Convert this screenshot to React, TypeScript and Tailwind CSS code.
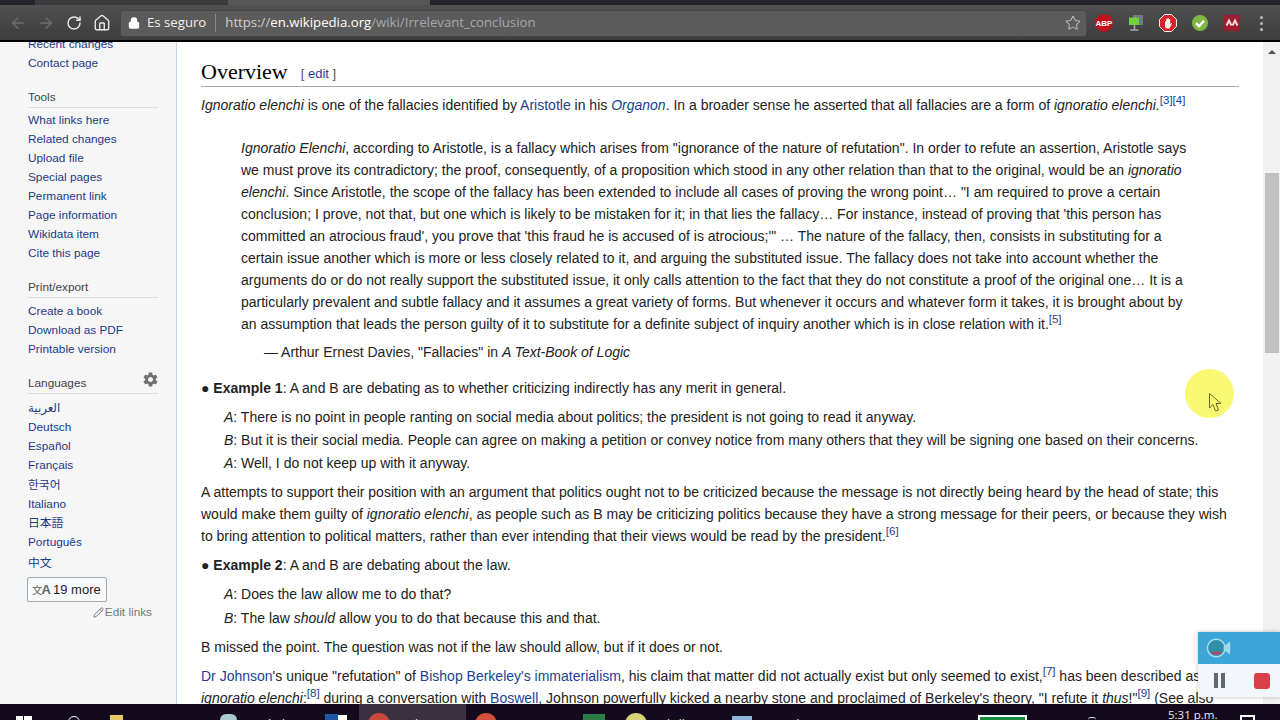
import React from "react";
import { ArrowLeft, ArrowRight, RotateCw, House, Lock, Star, Pencil } from "lucide-react";
import { IoMdSettings } from "react-icons/io";

const L = ({ children }: { children: React.ReactNode }) => <a className="text-[#1b3f94]">{children}</a>;
const S = ({ children }: { children: React.ReactNode }) => (
  <sup className="text-[11.5px] leading-none text-[#1b3f94] align-[0px]">{children}</sup>
);
const Line = ({ children }: { children: React.ReactNode }) => <div className="whitespace-nowrap">{children}</div>;

const Row = ({ children }: { children: React.ReactNode }) => (
  <div className="h-[19px] leading-[19px] text-[#1b3a88] whitespace-nowrap">{children}</div>
);
const Side = ({ items }: { items: string[] }) => (
  <div>
    {items.map((t) => (
      <Row key={t}>{t}</Row>
    ))}
  </div>
);
const Head = ({ children }: { children: React.ReactNode }) => (
  <div className="h-[20px] leading-[19px] text-[#444] border-b border-[#dcdcdc] w-[130px]">{children}</div>
);

function Ext({ children }: { children: React.ReactNode }) {
  return <div className="w-[18px] h-[18px] flex items-center justify-center shrink-0">{children}</div>;
}
const Tb = ({ children, className }: { children: React.ReactNode; className: string }) => (
  <div className={"mt-[13px] leading-[16px] text-[12px] whitespace-nowrap overflow-hidden shrink-0 " + className}>{children}</div>
);

export default function App() {
  return (
    <div className="relative w-[1280px] h-[720px] overflow-hidden flex flex-col bg-white font-['Liberation_Sans','Noto_Sans_CJK_KR','DejaVu_Sans',sans-serif]">
      {/* tab strip */}
      <div className="h-[5px] shrink-0 flex bg-[#24252a]">
        <div className="ml-[35px] w-[193px] h-[5px] bg-[#3a3a3c]" />
        <div className="w-[202px] h-[5px] bg-[#565656]" />
      </div>
      {/* toolbar */}
      <div className="h-[37px] pt-[1px] shrink-0 flex items-center bg-gradient-to-b from-[#505050] to-[#3d3d3d] border-b-2 border-black">
        <div className="flex items-center w-[120px] pl-[9px]">
          <ArrowLeft size={18} className="text-[#6d6d6d]" />
          <ArrowRight size={18} className="text-[#6d6d6d] ml-[10px]" />
          <RotateCw size={16} strokeWidth={2.2} className="text-[#e6e6e6] ml-[11px]" />
          <House size={18} strokeWidth={1.8} className="text-[#ececec] ml-[11px]" />
        </div>
        <div className="w-[967px] h-[27px] rounded-[3px] bg-[#5b5b5b] border border-[#454545] flex items-center pl-[7px] pr-[4px] font-['Open_Sans',sans-serif] text-[13.2px] whitespace-nowrap">
          <Lock size={12} strokeWidth={3} className="text-white fill-white" />
          <span className="ml-[7px] text-[#f0f0f0]">Es seguro</span>
          <span className="ml-[9px] mr-[9px] w-px h-[18px] bg-[#8a8a8a]" />
          <span className="text-[#d0d0d0]">https://</span>
          <span className="text-white">en.wikipedia.org</span>
          <span className="text-[#a8a8a8]">/wiki/Irrelevant_conclusion</span>
          <Star size={16} strokeWidth={1.6} className="ml-auto mr-[1px] text-[#b5b5b5]" />
        </div>
        <div className="flex items-center ml-[8px] gap-[14px]">
          <Ext>
            <svg width="18" height="18" viewBox="0 0 18 18"><polygon points="5.5,0.5 12.5,0.5 17.5,5.5 17.5,12.5 12.5,17.5 5.5,17.5 0.5,12.5 0.5,5.5" fill="#c2111a" /><text x="9" y="12" textAnchor="middle" fontSize="8" fontWeight="700" fill="#fff" fontFamily="Liberation Sans">ABP</text></svg>
          </Ext>
          <Ext>
            <svg width="18" height="18" viewBox="0 0 18 18"><rect x="6" y="1" width="10" height="10" fill="#6f7a86" /><rect x="2" y="3.5" width="10" height="7.5" fill="#6fd13a" /><path d="M7.5 11v4M3.5 16h8" stroke="#a8b0b0" strokeWidth="1.5" fill="none" /></svg>
          </Ext>
          <Ext>
            <svg width="18" height="18" viewBox="0 0 18 18"><polygon points="5.5,0.5 12.5,0.5 17.5,5.5 17.5,12.5 12.5,17.5 5.5,17.5 0.5,12.5 0.5,5.5" fill="#d9232b" stroke="#f4f4f4" strokeWidth="1" /><path d="M6 13 V7.5 a.8 .8 0 0 1 1.2 0 V5 a.8 .8 0 0 1 1.4 0 V4.6 a.8 .8 0 0 1 1.3 0 V5.5 a.8 .8 0 0 1 1.3 0 V10 l1-1.2 c.6 -.4 1.1 .1 .8 .7 L10.5 14.5 H7.5 Z" fill="#f5efe8" /></svg>
          </Ext>
          <Ext>
            <svg width="18" height="18" viewBox="0 0 18 18"><circle cx="9" cy="9" r="8" fill="#7fb742" /><path d="M5 9.2 l3 3 l5-5.4" stroke="#fff" strokeWidth="2.4" fill="none" /></svg>
          </Ext>
          <Ext>
            <svg width="18" height="18" viewBox="0 0 18 18"><rect x="1" y="1" width="16" height="16" fill="#9b1c2b" /><path d="M3.5 11.5 L6 6.5 L8.4 11.5 M9.6 11.5 L12 6.5 L14.5 11.5" stroke="#f5d7d7" strokeWidth="2" fill="none" /></svg>
          </Ext>
        </div>
        <div className="ml-[19px] flex flex-col gap-[3px]">
          <span className="w-[3px] h-[3px] rounded-full bg-[#bdbdbd]" />
          <span className="w-[3px] h-[3px] rounded-full bg-[#bdbdbd]" />
          <span className="w-[3px] h-[3px] rounded-full bg-[#bdbdbd]" />
        </div>
      </div>

      {/* page */}
      <div className="h-[662px] shrink-0 flex overflow-hidden">
        <aside className="w-[177px] shrink-0 bg-[#f6f6f6] border-r border-[#c7d8e6] pl-[28px] text-[11.8px] overflow-hidden relative">
          <div className="mt-[-7px]"><Side items={["Recent changes", "Contact page"]} /></div>
          <div className="mt-[15px] mb-[3px]"><Head>Tools</Head></div>
          <Side items={["What links here", "Related changes", "Upload file", "Special pages", "Permanent link", "Page information", "Wikidata item", "Cite this page"]} />
          <div className="mt-[15px] mb-[4px]"><Head>Print/export</Head></div>
          <Side items={["Create a book", "Download as PDF", "Printable version"]} />
          <div className="mt-[15px] mb-[5px] relative"><Head>Languages</Head>
            <IoMdSettings size={17} className="absolute left-[114px] top-[-3px] text-[#6f6f6f]" />
          </div>
          <Side items={["العربية", "Deutsch", "Español", "Français"]} />
          <div className="h-[20px] leading-[20px] text-[#1b3a88]">한국어</div>
          <Side items={["Italiano", "日本語", "Português"]} />
          <div className="h-[21px] leading-[21px] text-[#1b3a88] pt-[1px]">中文</div>
          <div className="mt-[4px] -ml-[1px] w-[80px] h-[25px] border border-[#a2a9b1] rounded-[2px] flex items-center pl-[4px] bg-[#f8f9fa] text-[#222]">
            <span className="w-[17px] text-[#666] whitespace-nowrap leading-none tracking-[-1px]"><span className="text-[10.5px]">文</span><span className="text-[13px] font-bold">A</span></span>
            <span className="text-[13px] ml-[4px]">19 more</span>
          </div>
          <div className="mt-[1px] w-[124px] flex items-center justify-end text-[#777] leading-[19px]">
            <Pencil size={11} className="mr-[1px]" />Edit links
          </div>
        </aside>

        <main className="flex-1 px-[24px] text-[14px] leading-[22px] text-[#222] overflow-hidden">
          <div className="h-[45px] flex items-end border-b border-[#a2a9b1] pb-[1px]">
            <span className="font-['Liberation_Serif',serif] text-[22px] leading-[26px] text-black">Overview</span>
            <span className="ml-[13px] text-[13px] leading-[22px] text-[#555]">[ <L>edit</L> ]</span>
          </div>
          <div className="mt-[7px]">
            <Line><i>Ignoratio elenchi</i> is one of the fallacies identified by <L>Aristotle</L> in his <i><L>Organon</L></i>. In a broader sense he asserted that all fallacies are a form of <i>ignoratio elenchi.</i><S>[3][4]</S></Line>
          </div>
          <div className="mt-[21px] ml-[40px]">
            <Line><i>Ignoratio Elenchi</i>, according to Aristotle, is a fallacy which arises from "ignorance of the nature of refutation". In order to refute an assertion, Aristotle says</Line>
            <Line>we must prove its contradictory; the proof, consequently, of a proposition which stood in any other relation than that to the original, would be an <i>ignoratio</i></Line>
            <Line><i>elenchi</i>. Since Aristotle, the scope of the fallacy has been extended to include all cases of proving the wrong point… "I am required to prove a certain</Line>
            <Line>conclusion; I prove, not that, but one which is likely to be mistaken for it; in that lies the fallacy… For instance, instead of proving that 'this person has</Line>
            <Line>committed an atrocious fraud', you prove that 'this fraud he is accused of is atrocious;'" … The nature of the fallacy, then, consists in substituting for a</Line>
            <Line>certain issue another which is more or less closely related to it, and arguing the substituted issue. The fallacy does not take into account whether the</Line>
            <Line>arguments do or do not really support the substituted issue, it only calls attention to the fact that they do not constitute a proof of the original one… It is a</Line>
            <Line>particularly prevalent and subtle fallacy and it assumes a great variety of forms. But whenever it occurs and whatever form it takes, it is brought about by</Line>
            <Line>an assumption that leads the person guilty of it to substitute for a definite subject of inquiry another which is in close relation with it.<S>[5]</S></Line>
          </div>
          <div className="mt-[6px] ml-[63px]"><Line>— Arthur Ernest Davies, "Fallacies" in <i>A Text-Book of Logic</i></Line></div>
          <div className="mt-[14px]"><Line>● <b>Example 1</b>: A and B are debating as to whether criticizing indirectly has any merit in general.</Line></div>
          <div className="mt-[7px] ml-[23px] leading-[23px]">
            <Line><i>A</i>: There is no point in people ranting on social media about politics; the president is not going to read it anyway.</Line>
            <Line><i>B</i>: But it is their social media. People can agree on making a petition or convey notice from many others that they will be signing one based on their concerns.</Line>
            <Line><i>A</i>: Well, I do not keep up with it anyway.</Line>
          </div>
          <div className="mt-[6px]">
            <Line>A attempts to support their position with an argument that politics ought not to be criticized because the message is not directly being heard by the head of state; this</Line>
            <Line>would make them guilty of <i>ignoratio elenchi</i>, as people such as B may be criticizing politics because they have a strong message for their peers, or because they wish</Line>
            <Line>to bring attention to political matters, rather than ever intending that their views would be read by the president.<S>[6]</S></Line>
          </div>
          <div className="mt-[7px]"><Line>● <b>Example 2</b>: A and B are debating about the law.</Line></div>
          <div className="mt-[6px] ml-[23px] leading-[24px]">
            <Line><i>A</i>: Does the law allow me to do that?</Line>
            <Line><i>B</i>: The law <i>should</i> allow you to do that because this and that.</Line>
          </div>
          <div className="mt-[6px]"><Line>B missed the point. The question was not if the law should allow, but if it does or not.</Line></div>
          <div className="mt-[7px]">
            <Line><L>Dr Johnson</L>'s unique "refutation" of <L>Bishop Berkeley's immaterialism</L>, his claim that matter did not actually exist but only seemed to exist,<S>[7]</S> has been described as</Line>
            <Line><i>ignoratio elenchi</i>:<S>[8]</S> during a conversation with <L>Boswell</L>, Johnson powerfully kicked a nearby stone and proclaimed of Berkeley's theory, "I refute it <i>thus</i>!"<S>[9]</S> (See also</Line>
          </div>
        </main>

        <div className="w-[17px] shrink-0 bg-[#f1f1f1] flex flex-col items-center">
          <div className="mt-[8px] w-0 h-0 border-x-[4px] border-x-transparent border-b-[4px] border-b-[#505050]" />
          <div className="mt-[119px] w-[14px] h-[180px] bg-[#c1c1c1]" />
        </div>
      </div>

      {/* taskbar */}
      <div className="h-[16px] shrink-0 bg-[#140a1d] flex overflow-hidden text-[#eee] font-['Open_Sans',sans-serif]">
        <div className="ml-[16px] mt-[12px] w-[16px] h-[4px] shrink-0 flex gap-[1px]">
          <div className="w-[7px] bg-white" /><div className="w-[8px] bg-white" />
        </div>
        <div className="ml-[36px] mt-[12px] w-[12px] h-[12px] shrink-0 rounded-full border border-white" />
        <div className="ml-[30px] mt-[11px] w-[13px] h-[5px] shrink-0 bg-[#e7c868]" />
        <Tb className="ml-[15px] w-[60px]">Lecturas</Tb>
        <div className="ml-[22px] mt-[10px] w-[17px] h-[6px] shrink-0 bg-[#a9c9d3] rounded-t-[6px]" />
        <Tb className="ml-[6px] w-[70px]">Sin título</Tb>
        <div className="ml-[12px] mt-[10px] w-[13px] h-[6px] shrink-0 bg-[#1e57a6]" />
        <div className="mt-[11px] w-[9px] h-[5px] shrink-0 bg-white" />
        <div className="ml-[12px] w-[107px] h-[16px] shrink-0 bg-[#3b303f] pl-[9px] flex">
          <div className="mt-[9px] w-[22px] h-[22px] shrink-0 rounded-full bg-[#c9483a]" />
          <Tb className="ml-[5px] w-[70px]">Irrelevant</Tb>
        </div>
        <div className="ml-[9px] mt-[9px] w-[22px] h-[22px] shrink-0 rounded-full bg-[#d6503c]" />
        <Tb className="ml-[8px] w-[70px]">Recursos</Tb>
        <div className="ml-[8px] mt-[10px] w-[22px] h-[6px] shrink-0 bg-[#2a7d46]" />
        <div className="ml-[20px] mt-[9px] w-[22px] h-[22px] shrink-0 rounded-full bg-[#d8d27a]" />
        <Tb className="ml-[5px] w-[70px]">Bolsillo</Tb>
        <div className="ml-[10px] mt-[12px] w-[20px] h-[4px] shrink-0 bg-[#8fb5d6]" />
        <Tb className="ml-[8px] w-[70px]">Recording</Tb>
        <div className="ml-[148px] mt-[11px] w-[49px] h-[5px] shrink-0 border-2 border-b-0 border-white bg-[#178a3e]" />
        <div className="ml-[61px] mt-[13px] w-[8px] h-[3px] shrink-0 border-t border-[#ddd] rounded-t-full" />
        <Tb className="ml-[9px] w-[12px]">((</Tb>
        <Tb className="ml-[11px] w-[24px]">ESP</Tb>
        <div className="ml-[16px] mt-[3px] w-[48px] text-center text-[11.5px] leading-[16px] text-[#e8e8e8] whitespace-nowrap shrink-0">5:31 p.m.</div>
        <div className="ml-[24px] mt-[11px] w-[15px] h-[5px] shrink-0 border-2 border-b-0 border-white" />
      </div>

      {/* overlays */}
      <div className="absolute left-[1185px] top-[369px] w-[49px] h-[49px] rounded-full bg-[#f9f873]" />
      <svg className="absolute left-[1208px] top-[392px]" width="15" height="21" viewBox="0 0 15 21">
        <path d="M1.5 1.5 V16 L5 12.5 L7.5 19 L10.5 18 L8 11.5 H13 Z" fill="#f9f873" stroke="#6b6a20" strokeWidth="1" />
      </svg>
      <div className="absolute left-[1198px] top-[632px] w-[82px] h-[65px] bg-[#f3f6fb] shadow-[0_0_4px_rgba(0,0,0,0.25)]">
        <div className="h-[32px] bg-[#3fa6da] flex items-center pl-[9px]">
          <svg width="24" height="22" viewBox="0 0 26 22">
            <circle cx="10" cy="11" r="9.5" fill="#2f8ea8" stroke="#a8e0ea" strokeWidth="1.5" />
            <path d="M18 9 L25 4 V18 L18 13 Z" fill="#9fdcea" />
            <path d="M4 15 H16 L14 18 H7 Z" fill="#b84a68" />
          </svg>
        </div>
        <div className="h-[33px] flex items-center pl-[16px]">
          <div className="w-[4px] h-[15px] bg-[#606870]" />
          <div className="ml-[3px] w-[4px] h-[15px] bg-[#606870]" />
          <div className="ml-[29px] w-[16px] h-[16px] rounded-[3px] bg-[#d84048]" />
        </div>
      </div>
    </div>
  );
}
